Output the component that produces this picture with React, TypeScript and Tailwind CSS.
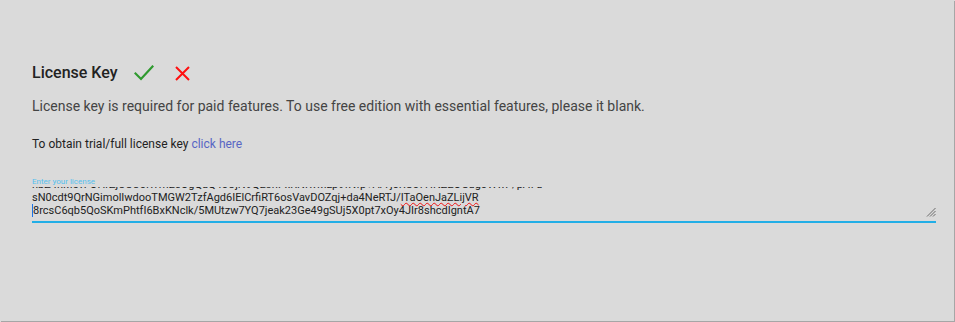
import { useState } from "react";

const KEY_LINES = [
  "hbZ4nMcvFOHrZjUCUoRYrn2eOgQuQ4oUjN9QE3nPxRNRvMzp9fNfp+ArYj5RCo7HNZ2OGugoWwP/pA7a",
  "sN0cdt9QrNGimolIwdooTMGW2TzfAgd6IElCrfiRT6osVavDOZqj+da4NeRTJ/ITaOenJaZLijVR",
  "8rcsC6qb5QoSKmPhtfI6BxKNclk/5MUtzw7YQ7jeak23Ge49gSUj5X0pt7xOy4JIr8shcdIgntA7",
];

function CheckIcon() {
  return (
    <svg width="20" height="16" viewBox="0 0 20 16" className="shrink-0">
      <path d="M1.5 8.5 L7 14 L18.5 1.5" fill="none" stroke="#2f9a2f" strokeWidth="2.2" strokeLinecap="square" />
    </svg>
  );
}

function CrossIcon() {
  return (
    <svg width="15" height="15" viewBox="0 0 15 15" className="shrink-0">
      <path d="M1 1 L14 14 M14 1 L1 14" fill="none" stroke="#ff1010" strokeWidth="2" />
    </svg>
  );
}

function ResizeGrip() {
  return (
    <svg width="10" height="10" viewBox="0 0 10 10" className="absolute right-0 bottom-[4px]">
      <path d="M9.5 1 L1 9.5 M9.5 4 L4 9.5 M9.5 7 L7 9.5" stroke="#6b6b6b" strokeWidth="1" />
    </svg>
  );
}

export default function App() {
  const [valid] = useState(true);

  return (
    <div className="min-h-[322px] bg-[#e6e6e6] font-['Roboto','Liberation_Sans',sans-serif]">
      <div className="h-[321px] w-[954px] bg-[#dadada] pl-8 pr-[18px] pt-[61px] shadow-[1px_1px_1px_rgba(0,0,0,0.28)]">
        <div className="flex h-6 items-center">
          <h2 className="text-[16px] leading-6 font-medium text-[#222]">License Key</h2>
          <span className="ml-4 flex items-center">{valid && <CheckIcon />}</span>
          <span className="ml-[21px] flex items-center">
            <CrossIcon />
          </span>
        </div>

        <p className="mt-[10px] text-[14px] leading-[22px] text-[#444]">
          License key is required for paid features. To use free edition with essential features, please it blank.
        </p>

        <p className="mt-[19px] text-[12px] leading-4 text-[#222]">
          To obtain trial/full license key{" "}
          <a href="#" className="text-[#5866c4]">
            click here
          </a>
        </p>

        <div className="mt-[25px]">
          <label className="block text-[8px] leading-[10px] text-[#55c0ee]">Enter your license</label>
          <div className="relative border-b-2 border-[#22aee6]">
            <div
              role="textbox"
              className="flex h-[34px] flex-col justify-end overflow-hidden pb-[4px] text-[11px] leading-[13px] text-[#222]"
            >
              <div className="whitespace-nowrap">{KEY_LINES[0]}</div>
              <div className="whitespace-nowrap">
                sN0cdt9QrNGimolIwdooTMGW2TzfAgd6IElCrfiRT6osVavDOZqj+da4NeRTJ/
                <span className="[text-decoration-line:underline] [text-decoration-style:wavy] [text-decoration-color:#e11] [text-decoration-thickness:1px] [text-underline-offset:1px]">
                  ITaOenJaZLijVR
                </span>
              </div>
              <div className="whitespace-nowrap border-l border-[#1a73e8]">{KEY_LINES[2]}</div>
            </div>
            <ResizeGrip />
          </div>
        </div>
      </div>
    </div>
  );
}
